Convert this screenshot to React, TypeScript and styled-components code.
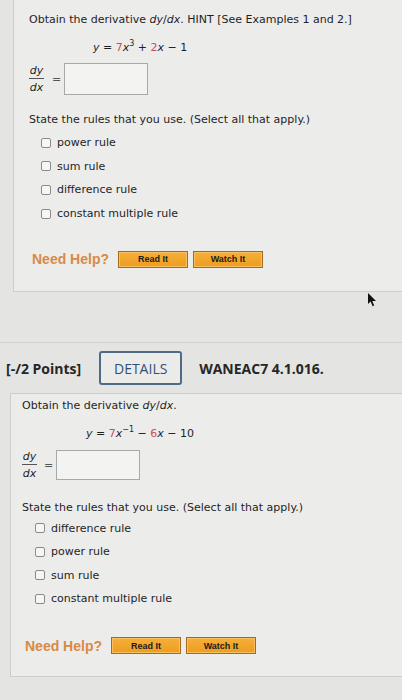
import React from 'react';
import styled, { createGlobalStyle } from 'styled-components';

const GlobalStyle = createGlobalStyle`
  html, body {
    margin: 0;
    padding: 0;
    background: #e4e4e3;
  }
  body {
    font-family: "DejaVu Sans", Verdana, sans-serif;
    color: #1f1f1f;
    overflow: hidden;
  }
`;

const Page = styled.div`
  position: relative;
  width: 402px;
  height: 700px;
  display: flex;
  flex-direction: column;
`;

const Panel = styled.div<{ $left: number; $top?: boolean; $pad: number }>`
  margin-left: ${(p) => p.$left}px;
  background: #ececeb;
  border-left: 1px solid #cdcdcc;
  border-bottom: 1px solid #cdcdcc;
  border-top: ${(p) => (p.$top ? '1px solid #cdcdcc' : 'none')};
  padding-left: ${(p) => p.$pad}px;
  display: flex;
  flex-direction: column;
`;

const Line = styled.div<{ $mt?: number; $h?: number }>`
  font-size: 11px;
  line-height: ${(p) => p.$h ?? 20}px;
  margin-top: ${(p) => p.$mt ?? 0}px;
  white-space: nowrap;
`;

const I = styled.i`
  font-style: italic;
`;

const Equation = styled(Line)`
  padding-left: 64px;
`;

const Red = styled.span`
  color: #cf4b5a;
`;

const Sup = styled.sup`
  font-size: 8px;
  vertical-align: 5px;
  line-height: 0;
`;

const AnswerRow = styled.div<{ $mt: number; $h: number }>`
  margin-top: ${(p) => p.$mt}px;
  height: ${(p) => p.$h}px;
  display: flex;
  align-items: center;
`;

const Fraction = styled.div`
  display: flex;
  flex-direction: column;
  align-items: center;
  font-size: 11px;
  font-style: italic;
  line-height: 13px;
`;

const FracBar = styled.div`
  width: 15px;
  height: 1px;
  background: #555;
  margin: 1px 0 2px;
`;

const Equals = styled.span<{ $ml: number }>`
  font-size: 11px;
  color: #555;
  margin: 0 3px 0 ${(p) => p.$ml}px;
`;

const AnswerBox = styled.div<{ $h: number }>`
  width: 82px;
  height: ${(p) => p.$h}px;
  border: 1px solid #a8a8a8;
  background: #f3f3f2;
`;

const Options = styled.div<{ $mt: number; $indent: number }>`
  margin-top: ${(p) => p.$mt}px;
  padding-left: ${(p) => p.$indent}px;
  display: flex;
  flex-direction: column;
`;

const Option = styled.label`
  height: 23.6px;
  display: flex;
  align-items: center;
  gap: 6px;
  font-size: 11px;
`;

const Box = styled.span`
  width: 8px;
  height: 8px;
  border: 1px solid #8a8a8a;
  border-radius: 2px;
  background: #f6f6f5;
`;

const HelpRow = styled.div<{ $mt: number; $mb: number }>`
  margin-top: ${(p) => p.$mt}px;
  margin-bottom: ${(p) => p.$mb}px;
  height: 20px;
  display: flex;
  align-items: center;
  padding-left: 3px;
`;

const NeedHelp = styled.span`
  font-family: "Liberation Sans", Arial, sans-serif;
  font-weight: bold;
  font-size: 14px;
  color: #d88a45;
  margin-right: 9px;
`;

const HelpButton = styled.span`
  width: 68px;
  height: 15px;
  margin-right: 5px;
  display: flex;
  align-items: center;
  justify-content: center;
  background: linear-gradient(#f6b03a, #ee9c1f);
  border: 1px solid #a66a1e;
  box-shadow: inset 0 0 0 1px #f7c060;
  font-family: "Liberation Sans", Arial, sans-serif;
  font-weight: bold;
  font-size: 9px;
  color: #1b1b1b;
`;

const Header = styled.div`
  margin-top: 50px;
  height: 50px;
  border-top: 1px solid #d0d0cf;
  display: flex;
  align-items: center;
  padding-left: 6px;
  font-family: "Open Sans", sans-serif;
`;

const HeaderText = styled.span`
  font-weight: bold;
  font-size: 14px;
  color: #262626;
`;

const DetailsButton = styled.span`
  width: 79px;
  height: 30px;
  margin: 0 17px 0 18px;
  border: 2px solid #4f6a86;
  border-radius: 3px;
  display: flex;
  align-items: center;
  justify-content: center;
  font-size: 14px;
  color: #2f5175;
  background: #ebebea;
`;

const Cursor = styled.svg`
  position: absolute;
  left: 367px;
  top: 293px;
`;

const Arrow = () => (
  <Cursor width="10" height="14" viewBox="0 0 10 14">
    <path d="M1 0 L1 11 L3.6 8.6 L5.6 13.2 L7.2 12.4 L5.3 8 L9 8 Z" fill="#111" />
  </Cursor>
);

const App: React.FC = () => {
  return (
    <Page>
      <GlobalStyle />
      <Panel $left={13} $pad={15}>
        <Line $mt={10}>
          Obtain the derivative <I>dy</I>/<I>dx</I>. HINT [See Examples 1 and 2.]
        </Line>
        <Equation $mt={8}>
          <I>y</I> = <Red>7</Red><I>x</I><Sup>3</Sup> + <Red>2</Red><I>x</I> − 1
        </Equation>
        <AnswerRow $mt={5} $h={32}>
          <Fraction>
            <span>dy</span>
            <FracBar />
            <span>dx</span>
          </Fraction>
          <Equals $ml={8}>=</Equals>
          <AnswerBox $h={30} />
        </AnswerRow>
        <Line $mt={15}>State the rules that you use. (Select all that apply.)</Line>
        <Options $mt={1} $indent={12}>
          {['power rule', 'sum rule', 'difference rule', 'constant multiple rule'].map((r) => (
            <Option key={r}>
              <Box />
              {r}
            </Option>
          ))}
        </Options>
        <HelpRow $mt={24} $mb={22}>
          <NeedHelp>Need Help?</NeedHelp>
          <HelpButton>Read It</HelpButton>
          <HelpButton>Watch It</HelpButton>
        </HelpRow>
      </Panel>

      <Header>
        <HeaderText>[-/2 Points]</HeaderText>
        <DetailsButton>DETAILS</DetailsButton>
        <HeaderText>WANEAC7 4.1.016.</HeaderText>
      </Header>

      <Panel $left={10} $top $pad={11}>
        <Line $mt={2}>
          Obtain the derivative <I>dy</I>/<I>dx</I>.
        </Line>
        <Equation $mt={8}>
          <I>y</I> = <Red>7</Red><I>x</I><Sup>−1</Sup> − <Red>6</Red><I>x</I> − 10
        </Equation>
        <AnswerRow $mt={6} $h={30}>
          <Fraction>
            <span>dy</span>
            <FracBar />
            <span>dx</span>
          </Fraction>
          <Equals $ml={7}>=</Equals>
          <AnswerBox $h={28} />
        </AnswerRow>
        <Line $mt={20} $h={16}>State the rules that you use. (Select all that apply.)</Line>
        <Options $mt={0} $indent={13}>
          {['difference rule', 'power rule', 'sum rule', 'constant multiple rule'].map((r) => (
            <Option key={r}>
              <Box />
              {r}
            </Option>
          ))}
        </Options>
        <HelpRow $mt={25} $mb={20}>
          <NeedHelp>Need Help?</NeedHelp>
          <HelpButton>Read It</HelpButton>
          <HelpButton>Watch It</HelpButton>
        </HelpRow>
      </Panel>
      <Arrow />
    </Page>
  );
};

export default App;
